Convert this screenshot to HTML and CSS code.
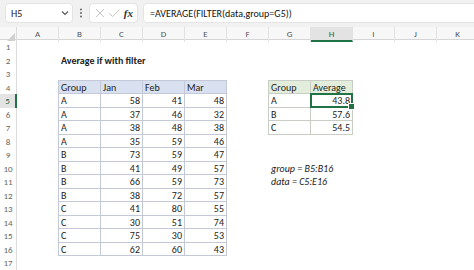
FILE: index.html
```html
<!DOCTYPE html>
<html lang="en">
<head>
    <meta charset="UTF-8">
    <title>Average if with filter</title>
    <link rel="stylesheet" href="styles.css">
</head>
<body>
    <!-- formula bar -->
    <div class="toolbar">
        <div class="namebox">
            <span>H5</span>
            <svg class="chev" width="8" height="6" viewBox="0 0 8 6"><path d="M1 1.5 L4 4.5 L7 1.5" fill="none" stroke="#555" stroke-width="1.1"/></svg>
        </div>
        <svg class="dots" width="4" height="10" viewBox="0 0 4 10"><circle cx="2" cy="1.5" r="1" fill="#666"/><circle cx="2" cy="5" r="1" fill="#666"/><circle cx="2" cy="8.5" r="1" fill="#666"/></svg>
        <div class="fnbox">
            <svg width="12" height="12" viewBox="0 0 12 12"><path d="M2 2 L10 10 M10 2 L2 10" stroke="#c4c4c4" stroke-width="1"/></svg>
            <svg width="13" height="12" viewBox="0 0 13 12"><path d="M1.5 6.5 L4.5 9.5 L11.5 2.5" fill="none" stroke="#c4c4c4" stroke-width="1"/></svg>
            <span class="fx">fx</span>
        </div>
        <div class="formula">=AVERAGE(FILTER(data,group=G5))</div>
    </div>

    <!-- column headers -->
    <div class="colheads">
        <div class="corner">
            <svg width="8" height="8" viewBox="0 0 8 8"><polygon points="8,0 8,8 0,8" fill="#d0d0d0"/></svg>
        </div>
        <div class="colhead">A</div>
        <div class="colhead">B</div>
        <div class="colhead">C</div>
        <div class="colhead">D</div>
        <div class="colhead">E</div>
        <div class="colhead">F</div>
        <div class="colhead">G</div>
        <div class="colhead active">H</div>
        <div class="colhead">I</div>
        <div class="colhead">J</div>
        <div class="colhead">K</div>
    </div>

    <!-- sheet -->
    <div class="sheet">
        <div class="rowhead">1</div>
        <div class="rowhead">2</div>
        <div class="rowhead">3</div>
        <div class="rowhead">4</div>
        <div class="rowhead active">5</div>
        <div class="rowhead">6</div>
        <div class="rowhead">7</div>
        <div class="rowhead">8</div>
        <div class="rowhead">9</div>
        <div class="rowhead">10</div>
        <div class="rowhead">11</div>
        <div class="rowhead">12</div>
        <div class="rowhead">13</div>
        <div class="rowhead">14</div>
        <div class="rowhead">15</div>
        <div class="rowhead">16</div>
        <div class="rowhead">17</div>

        <div class="title">Average if with filter</div>

        <div class="data-table">
            <div class="cell head">Group</div>
            <div class="cell head">Jan</div>
            <div class="cell head">Feb</div>
            <div class="cell head">Mar</div>

            <div class="cell">A</div><div class="cell num">58</div><div class="cell num">41</div><div class="cell num">48</div>
            <div class="cell">A</div><div class="cell num">37</div><div class="cell num">46</div><div class="cell num">32</div>
            <div class="cell">A</div><div class="cell num">38</div><div class="cell num">48</div><div class="cell num">38</div>
            <div class="cell">A</div><div class="cell num">35</div><div class="cell num">59</div><div class="cell num">46</div>
            <div class="cell">B</div><div class="cell num">73</div><div class="cell num">59</div><div class="cell num">47</div>
            <div class="cell">B</div><div class="cell num">41</div><div class="cell num">49</div><div class="cell num">57</div>
            <div class="cell">B</div><div class="cell num">66</div><div class="cell num">59</div><div class="cell num">73</div>
            <div class="cell">B</div><div class="cell num">38</div><div class="cell num">72</div><div class="cell num">57</div>
            <div class="cell">C</div><div class="cell num">41</div><div class="cell num">80</div><div class="cell num">55</div>
            <div class="cell">C</div><div class="cell num">30</div><div class="cell num">51</div><div class="cell num">74</div>
            <div class="cell">C</div><div class="cell num">75</div><div class="cell num">30</div><div class="cell num">53</div>
            <div class="cell">C</div><div class="cell num">62</div><div class="cell num">60</div><div class="cell num">43</div>
        </div>

        <div class="result-table">
            <div class="cell head">Group</div>
            <div class="cell head">Average</div>
            <div class="cell">A</div><div class="cell num sel">43.8</div>
            <div class="cell">B</div><div class="cell num">57.6</div>
            <div class="cell">C</div><div class="cell num">54.5</div>
        </div>

        <div class="notes">
            <div>group = B5:B16</div>
            <div>data = C5:E16</div>
        </div>
    </div>
</body>
</html>
```

FILE: styles.css
```css
* {
    margin: 0;
    padding: 0;
    box-sizing: border-box;
}

body {
    width: 474px;
    height: 270px;
    overflow: hidden;
    background-color: #fff;
    font-family: 'Carlito', 'Lato', sans-serif;
    font-size: 10px;
    color: #222;
}

/* formula bar */
.toolbar {
    height: 27px;
    background-color: #f1f1f1;
    display: flex;
    align-items: center;
    padding: 0 0 1px 5px;
    gap: 5px;
}

.namebox,
.fnbox,
.formula {
    height: 20px;
    background-color: #fff;
    border: 1px solid #e4e4e4;
    border-radius: 4px;
    display: flex;
    align-items: center;
}

.namebox {
    width: 68px;
    padding: 0 3px 0 5px;
    justify-content: space-between;
    font-size: 10px;
}

.dots {
    margin: 0 1px;
}

.fnbox {
    width: 49px;
    padding: 0 4px;
    justify-content: space-between;
}

.fx {
    font-family: 'Liberation Serif', serif;
    font-style: italic;
    font-weight: bold;
    font-size: 11px;
    color: #333;
}

.formula {
    flex: 1;
    margin-right: -10px;
    padding-left: 6px;
    font-size: 10px;
    color: #111;
}

/* column headers */
.colheads {
    display: grid;
    grid-template-columns: 17px repeat(11, 42px);
    height: 13px;
    background-color: #f7f7f7;
    border-bottom: 1px solid #d6d6d6;
}

.corner {
    display: flex;
    align-items: flex-end;
    justify-content: flex-end;
    padding: 0 1px 1px 0;
    border-right: 1px solid #dcdcdc;
}

.colhead {
    text-align: center;
    font-size: 9px;
    line-height: 13px;
    color: #555;
    border-right: 1px solid #e2e2e2;
}

.colhead.active {
    background-color: #e3e3e3;
    color: #1e6b41;
    border-bottom: 2px solid #217346;
}

/* sheet body */
.sheet {
    display: grid;
    grid-template-columns: 17px repeat(11, 42px);
    grid-template-rows: repeat(17, 13.5px);
}

.rowhead {
    grid-column: 1;
    text-align: center;
    font-size: 9px;
    line-height: 13.5px;
    color: #666;
    border-right: 1px solid #dcdcdc;
}

.rowhead.active {
    background-color: #e3e3e3;
    color: #1e6b41;
    border-right: 2px solid #217346;
}

.title {
    grid-column: 3 / span 4;
    grid-row: 2;
    font-weight: bold;
    line-height: 13.5px;
    padding-left: 2px;
}

.data-table,
.result-table {
    display: grid;
    grid-auto-rows: 13.5px;
    margin: -1px 0 0 -1px;
    border-top: 1px solid #c3c9d6;
    border-left: 1px solid #c3c9d6;
}

.data-table {
    grid-column: 3 / 7;
    grid-row: 4 / 17;
    grid-template-columns: repeat(4, 42px);
}

.result-table {
    grid-column: 8 / 10;
    grid-row: 4 / 8;
    grid-template-columns: repeat(2, 42px);
    border-color: #c8cdc6;
}

.cell {
    line-height: 13px;
    padding: 0 2px;
    border-right: 1px solid #c3c9d6;
    border-bottom: 1px solid #c3c9d6;
    white-space: nowrap;
}

.result-table .cell {
    border-color: #c8cdc6;
}

.data-table .head {
    background-color: #d9e0f0;
}

.result-table .head {
    background-color: #e2eedb;
}

.num {
    text-align: right;
}

/* active cell */
.sel {
    position: relative;
}

.sel::after {
    content: "";
    position: absolute;
    top: -1px;
    left: -1px;
    right: -1px;
    bottom: -1px;
    border: 2px solid #217346;
}

.sel::before {
    content: "";
    position: absolute;
    right: -3px;
    bottom: -3px;
    width: 5px;
    height: 5px;
    background-color: #217346;
    border: 1px solid #fff;
    z-index: 1;
}

.notes {
    grid-column: 8 / 11;
    grid-row: 10 / 12;
    font-style: italic;
    line-height: 13.5px;
    padding-left: 2px;
}
```
